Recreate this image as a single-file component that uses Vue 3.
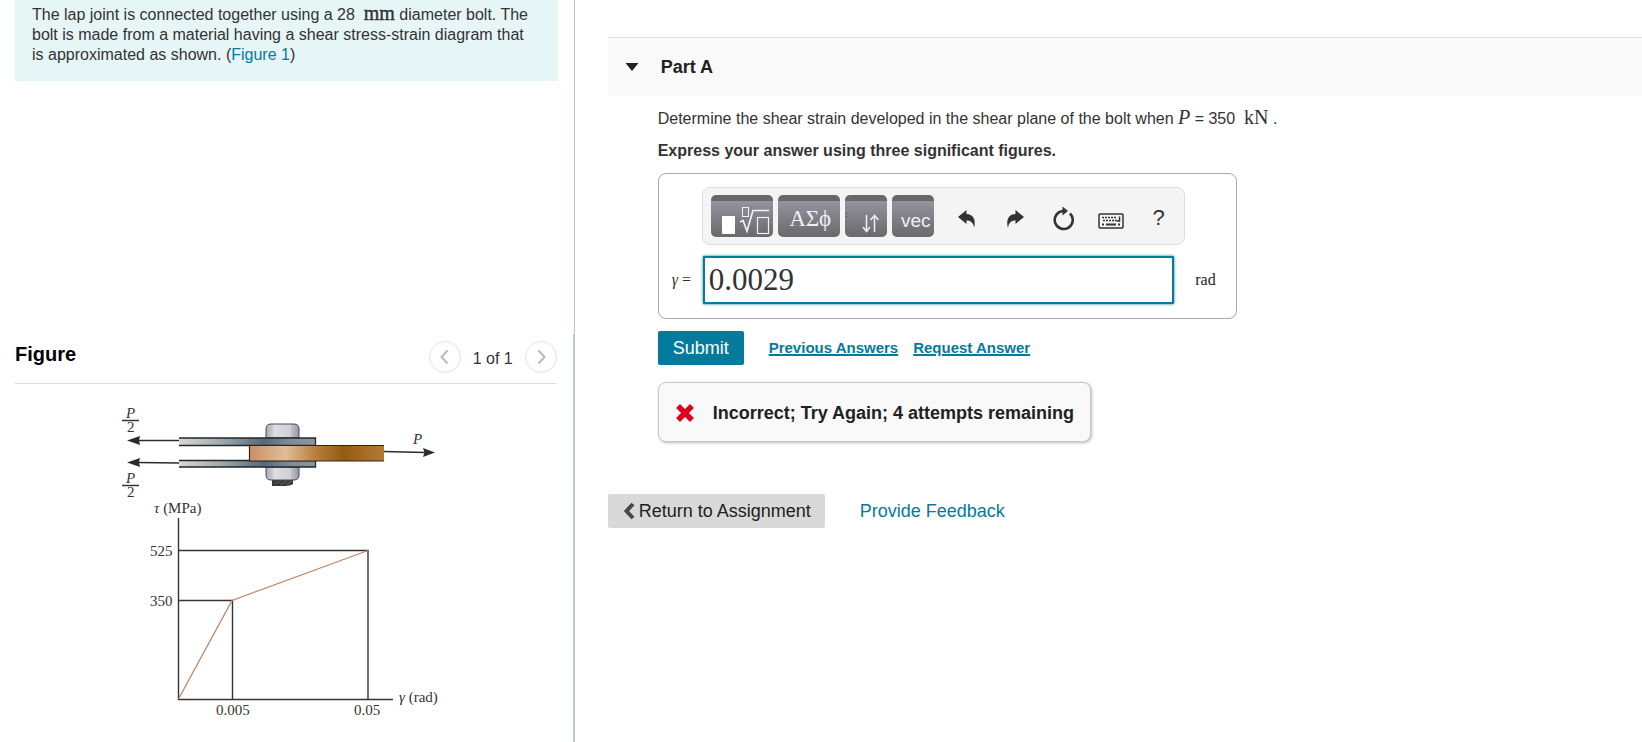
<script setup>
import { ref } from 'vue'

const answer = ref('0.0029')
const expanded = ref(true)
</script>

<template>
  <div class="page">
    <aside class="side">
      <section class="problem">
        <p class="statement">
          The lap joint is connected together using a 28 &nbsp;<span class="math unit-bold">mm</span> diameter bolt. The bolt is made from a material having a shear stress-strain diagram that is approximated as shown. (<a href="#figure">Figure 1</a>)
        </p>
      </section>

      <section id="figure" class="figure">
        <header class="figure-head">
          <h2>Figure</h2>
          <nav class="pager">
            <button type="button" class="round" aria-label="Previous figure">
              <svg width="30" height="30" viewBox="0 0 30 30"><path d="M17.500 8.500L11.500 15L17.500 21.500" /></svg>
            </button>
            <span class="count">1 of 1</span>
            <button type="button" class="round" aria-label="Next figure">
              <svg width="30" height="30" viewBox="0 0 30 30"><path d="M12.500 8.500L18.500 15L12.500 21.500" /></svg>
            </button>
          </nav>
        </header>

        <svg class="drawing" width="335" height="325" viewBox="115 400 335 325" role="img" aria-label="Lap joint and shear stress-strain diagram">
          <defs>
            <linearGradient id="steel" x1="0" x2="1">
              <stop offset="0" stop-color="#d8d9d4" />
              <stop offset=".3" stop-color="#a3abae" />
              <stop offset=".62" stop-color="#53697a" />
              <stop offset=".8" stop-color="#7d8b98" />
              <stop offset="1" stop-color="#8b959e" />
            </linearGradient>
            <linearGradient id="bronze" x1="0" x2="1">
              <stop offset="0" stop-color="#c98f62" />
              <stop offset=".27" stop-color="#dfbd98" />
              <stop offset=".5" stop-color="#b77d3e" />
              <stop offset=".7" stop-color="#945b10" />
              <stop offset="1" stop-color="#b67a35" />
            </linearGradient>
            <linearGradient id="hex" x1="0" x2="1">
              <stop offset="0" stop-color="#a9adb4" />
              <stop offset=".2" stop-color="#c9ccd1" />
              <stop offset=".24" stop-color="#dcdee2" />
              <stop offset=".74" stop-color="#cdd0d5" />
              <stop offset=".78" stop-color="#b9bdc4" />
              <stop offset="1" stop-color="#9599a0" />
            </linearGradient>
          </defs>

          <path d="M266 438V429Q266 424 271 424H294Q299 424 299 429V438Z" fill="url(#hex)" stroke="#4a4a4d" />
          <path d="M272 480H293V484Q290 486 283 486H272Z" fill="#38383a" />
          <path d="M275 484L281 481M280 485L287 481M286 485L292 481" stroke="#77777a" stroke-width=".7" />
          <path d="M266 467V475Q266 480 271 480H294Q299 480 299 475V467Z" fill="url(#hex)" stroke="#4a4a4d" />
          <rect x="179" y="438" width="137" height="7" fill="url(#steel)" />
          <path d="M179 438H315.500V445.500H179" fill="none" stroke="#252729" stroke-width="1.300" />
          <rect x="179" y="460" width="137" height="7" fill="url(#steel)" />
          <path d="M179 460.500H315.500V467H179" fill="none" stroke="#252729" stroke-width="1.300" />
          <rect x="249" y="446" width="135" height="15" fill="url(#bronze)" />
          <path d="M384 445.500H249.500V461H384" fill="none" stroke="#302416" stroke-width="1.200" />

          <g stroke="#2c2c2e" stroke-width="1.500" fill="none">
            <path d="M138 440.500H179M138 462.500L179 463M384 451.500L425 452.500" />
          </g>
          <g fill="#2c2c2e">
            <path d="M127 440.500L140 436L139 440.500L140 445Z" />
            <path d="M127 462.500L140 458L139 462.500L140 467Z" />
            <path d="M435 452.500L423 448L424.500 452.500L423 457Z" />
          </g>

          <g stroke="#333436" stroke-width="1.400" fill="none">
            <path d="M178.500 518V699.500H393M178.500 550.500H368V699M178.500 600.500H232.500V699M122 420.500H139M122 485.500H139" />
          </g>
          <path d="M178.500 699L232 600.500L368 550.500" fill="none" stroke="#c48368" stroke-width="1.300" />

          <g class="labels">
            <text x="126" y="418" class="it">P</text>
            <text x="127" y="432">2</text>
            <text x="126" y="483" class="it">P</text>
            <text x="127" y="497">2</text>
            <text x="413" y="444" class="it">P</text>
            <text x="154" y="513"><tspan class="it">τ</tspan> (MPa)</text>
            <text x="150" y="556">525</text>
            <text x="150" y="606">350</text>
            <text x="216" y="715">0.005</text>
            <text x="354" y="715">0.05</text>
            <text x="399" y="702"><tspan class="it">γ</tspan> (rad)</text>
          </g>
        </svg>
      </section>
    </aside>

    <main class="main">
      <header class="part-head">
        <button type="button" class="toggle" aria-label="Toggle Part A" :aria-expanded="expanded" @click="expanded = !expanded">
          <svg width="14" height="8" viewBox="0 0 14 8"><path d="M.5 0H13.500L7 8Z" fill="#212121" /></svg>
        </button>
        <h2>Part A</h2>
      </header>

      <div v-if="expanded" class="part-body">
        <p>
          Determine the shear strain developed in the shear plane of the bolt when <span class="math it">P</span> = 350 &nbsp;<span class="math">kN</span> .
        </p>
        <p class="strong">Express your answer using three significant figures.</p>

        <form class="answer" @submit.prevent>
          <div class="toolbar">
            <button type="button" class="key wide" aria-label="Templates">
              <svg width="62" height="41" viewBox="0 0 62 41" fill="none" stroke="#f0f0f2">
                <rect x="11" y="20" width="13" height="18" fill="#fff" stroke="none" />
                <rect x="31.500" y="11.500" width="6" height="9" />
                <path d="M29 26L32 24.500L36 35L42 14.500H58" stroke-width="1.700" />
                <rect x="46.500" y="21.500" width="11" height="16" stroke-width="1.200" />
              </svg>
            </button>
            <button type="button" class="key wide greek">ΑΣϕ</button>
            <button type="button" class="key narrow" aria-label="Subscripts">
              <svg width="42" height="41" viewBox="0 0 42 41" fill="none" stroke="#f0f0f2" stroke-width="1.500">
                <path d="M21.500 19V35M18 31L21.500 35.500L25 31M29.500 36V20M25.500 24L29.500 19.500L33.500 24" />
                <path d="M1.500 17V18M1.500 20V21" stroke="#4a4a4c" />
              </svg>
            </button>
            <button type="button" class="key narrow vec">vec</button>
            <button type="button" class="tool" aria-label="Undo">
              <svg width="26" height="26" viewBox="0 0 26 26"><path d="M4 12L12.500 5V9C18.500 9 22.500 14 20 23C19.500 18 17 15.500 12.500 15.500V19Z" fill="#333" /></svg>
            </button>
            <button type="button" class="tool" aria-label="Redo">
              <svg width="26" height="26" viewBox="0 0 26 26"><path d="M22 12L13.500 5V9C7.500 9 3.500 14 6 23C6.500 18 9 15.500 13.500 15.500V19Z" fill="#333" /></svg>
            </button>
            <button type="button" class="tool" aria-label="Reset">
              <svg width="26" height="26" viewBox="0 0 26 26">
                <path d="M13 6A9 9 0 1 0 20 8.500" fill="none" stroke="#333" stroke-width="2.600" />
                <path d="M12.500 1.500L18 6L12.500 10.500Z" fill="#333" />
              </svg>
            </button>
            <button type="button" class="tool" aria-label="Keyboard shortcuts">
              <svg width="26" height="26" viewBox="0 0 26 26" fill="none" stroke="#333">
                <rect x="1" y="9" width="24" height="14" rx="1" stroke-width="1.500" />
                <path d="M4 12.500H19M5 15.500H20" stroke-width="1.500" stroke-dasharray="2 1" />
                <path d="M21.500 11.500V16H19" stroke-width="1.500" />
                <path d="M4 19.500H6M8 19.500H18M20 19.500H22" stroke-width="2" />
              </svg>
            </button>
            <button type="button" class="tool help" aria-label="Help">?</button>
          </div>
          <div class="entry">
            <label for="gamma"><i>γ</i> =</label>
            <input id="gamma" v-model="answer" type="text" autocomplete="off" />
            <span class="rad">rad</span>
          </div>
        </form>

        <div class="actions">
          <button type="button" class="submit">Submit</button>
          <a href="#previous">Previous Answers</a>
          <a href="#request">Request Answer</a>
        </div>

        <div class="feedback" role="status">
          <svg width="18" height="18" viewBox="0 0 18 18"><path d="M4 4L14 14M14 4L4 14" stroke="#db0020" stroke-width="5.500" stroke-linecap="square" /></svg>
          <span>Incorrect; Try Again; 4 attempts remaining</span>
        </div>
      </div>

      <footer class="bottom">
        <button type="button" class="return">
          <svg width="12" height="18" viewBox="0 0 12 18"><path d="M10 2L3.500 9L10 16" fill="none" stroke="#484848" stroke-width="4" /></svg>
          Return to Assignment
        </button>
        <a href="#feedback">Provide Feedback</a>
      </footer>
    </main>
  </div>
</template>

<style>
body {
  margin: 0;
  background: #fff;
}
</style>

<style scoped>
* {
  box-sizing: border-box;
}
.page {
  display: flex;
  min-height: 100vh;
  font-family: "Liberation Sans", Arial, sans-serif;
  font-size: 16px;
  line-height: 20px;
  color: #333;
}
h2,
p {
  margin: 0;
}
a {
  color: #047a9c;
  text-decoration: none;
}
button {
  font-family: inherit;
  border: 0;
  padding: 0;
  cursor: pointer;
}
svg {
  display: block;
}
.math {
  font-family: "Liberation Serif", serif;
  font-size: 20px;
  line-height: 16px;
}
.it {
  font-style: italic;
}

.side {
  flex: 0 0 35%;
  display: flex;
  flex-direction: column;
}
.problem {
  flex: 0 0 45vh;
  padding: 0 16px 0 15px;
  border-right: 1px solid #b9c9e0;
}
.statement {
  padding: 5px 20px 16px 17px;
  background: #e6f6f7;
}
.unit-bold {
  -webkit-text-stroke: 0.4px #333;
}
.figure {
  flex: 1;
  padding: 0 16px 0 15px;
  border-right: 2px solid #b9c9e0;
}
.figure-head {
  display: flex;
  justify-content: space-between;
  align-items: flex-start;
  padding: 6px 0 10px;
  border-bottom: 1px solid #ddd;
}
.figure-head h2 {
  font-size: 20px;
  line-height: 28px;
  color: #000;
}
.pager {
  display: flex;
  align-items: center;
  gap: 12px;
  padding-top: 1px;
}
.count {
  padding-top: 4px;
}
.round {
  width: 32px;
  height: 32px;
  display: grid;
  place-items: center;
  border: 1px solid #e3e3e3;
  border-radius: 50%;
  background: #fff;
}
.round path {
  fill: none;
  stroke: #bbb;
  stroke-width: 2;
}
.drawing {
  margin: 16px 0 0 100px;
}
.labels {
  font-family: "Liberation Serif", serif;
  font-size: 15px;
  fill: #333;
}

.main {
  flex: 1;
  min-width: 0;
  padding: 37px 0 0 33px;
}
.part-head {
  display: flex;
  align-items: center;
  gap: 22px;
  height: 59px;
  padding-left: 17px;
  border-top: 1px solid #ddd;
  background: #f9f9f9;
}
.part-head h2 {
  font-size: 18px;
  color: #212121;
}
.toggle {
  background: none;
}
.part-body {
  display: flex;
  flex-direction: column;
  align-items: flex-start;
  gap: 12px;
  padding: 13px 16px 0 50px;
}
.strong {
  font-weight: bold;
}
.answer {
  width: 579px;
  max-width: 100%;
  padding: 13px 20px 14px 13px;
  border: 1px solid #a9a9a9;
  border-radius: 8px;
}
.toolbar {
  display: flex;
  align-items: center;
  gap: 5px;
  width: 483px;
  height: 58px;
  margin-left: 30px;
  padding-left: 8px;
  border: 1px solid #ddd;
  border-radius: 8px;
  background: #f4f4f4;
}
.key {
  height: 42px;
  border-radius: 5px;
  border-top: 6px solid #68686a;
  background: linear-gradient(#95939f, #69696b);
  color: #f0f0f2;
  overflow: hidden;
}
.key svg {
  margin-top: -6px;
}
.wide {
  width: 62px;
}
.narrow {
  width: 42px;
}
.greek {
  font-family: "Liberation Serif", serif;
  font-size: 23px;
  padding-left: 3px;
}
.vec {
  font-size: 19px;
  padding: 4px 0 0 6px;
}
.tool {
  width: 26px;
  height: 26px;
  margin: 4px 0 0 17px;
  background: none;
  color: #333;
}
.key + .tool {
  margin-left: 15px;
}
.help {
  font-size: 22px;
  line-height: 26px;
}
.entry {
  display: flex;
  align-items: center;
  margin-top: 11px;
}
.entry label {
  flex: 0 0 31px;
  font-family: "Liberation Serif", serif;
}
.entry input {
  flex: 1;
  min-width: 0;
  height: 48px;
  padding: 0 4px;
  border: 2px solid #047a9c;
  border-radius: 1px;
  outline: 0;
  box-shadow: 0 0 3px #047a9c;
  font-family: "Liberation Serif", serif;
  font-size: 31px;
  color: #333;
}
.rad {
  margin-left: 21px;
  font-family: "Liberation Serif", serif;
  color: #222;
}
.actions {
  display: flex;
  align-items: center;
  gap: 15px;
}
.actions a {
  font-size: 15px;
  font-weight: bold;
  text-decoration: underline;
  text-decoration-thickness: 2px;
}
.submit {
  width: 86px;
  height: 34px;
  margin-right: 10px;
  border-radius: 2px;
  background: #047a9c;
  color: #fff;
  font-size: 18px;
}
.feedback {
  display: flex;
  align-items: center;
  gap: 19px;
  height: 60px;
  margin-top: 5px;
  padding: 2px 16px 0 17px;
  border: 1px solid #c7c7c7;
  border-radius: 8px;
  background: #f9f9f9;
  box-shadow: 1px 1px 3px #bbb;
  font-size: 18px;
  font-weight: bold;
  color: #212121;
}
.bottom {
  display: flex;
  align-items: center;
  gap: 35px;
  margin-top: 52px;
  font-size: 18px;
}
.return {
  display: flex;
  align-items: center;
  gap: 4px;
  height: 34px;
  padding: 0 14px 0 15px;
  border-radius: 2px;
  background: #d9d9d9;
  font-size: 18px;
  color: #212121;
}
</style>
